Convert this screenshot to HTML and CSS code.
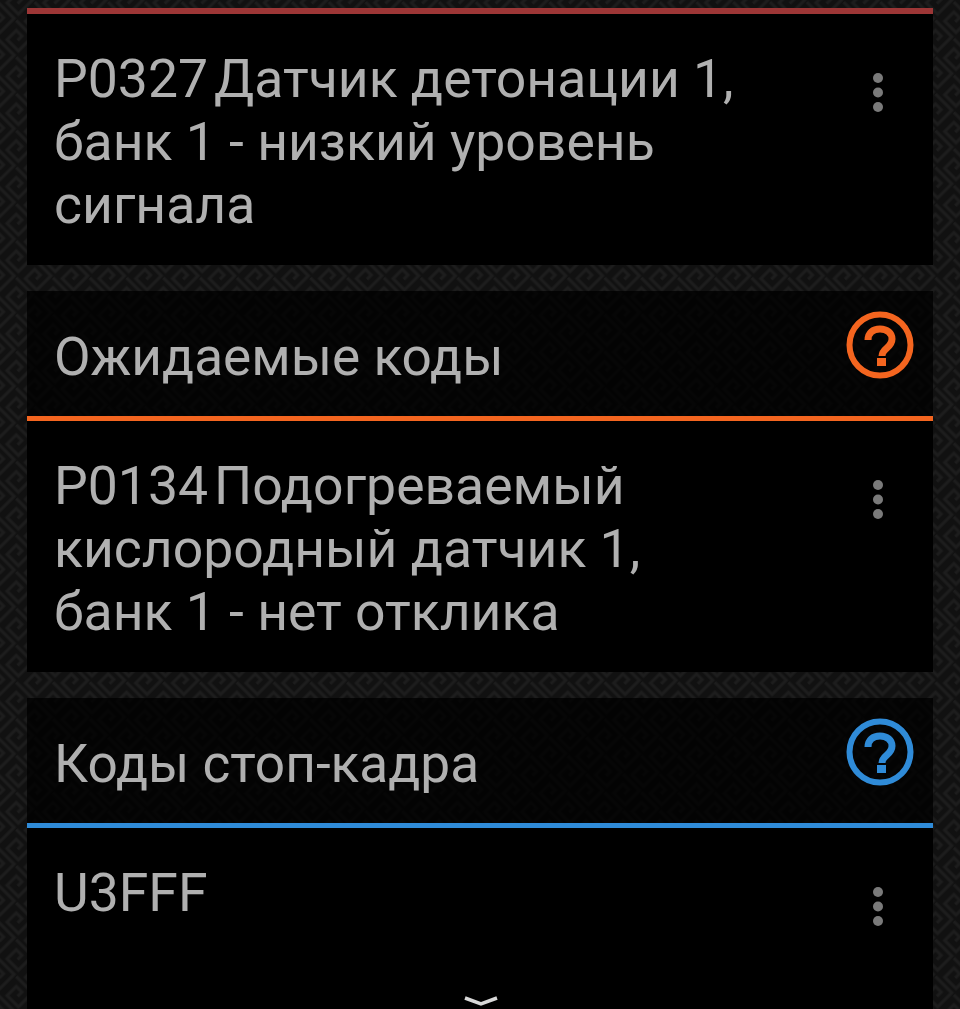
FILE: index.html
```html
<!DOCTYPE html>
<html lang="ru">
<head>
<meta charset="utf-8">
<title>Коды</title>
<link rel="stylesheet" href="styles.css">
</head>
<body>
<main class="list">
  <section class="card first">
    <div class="rule red"></div>
    <div class="row">
      <p class="code"><span class="num">P0327</span>Датчик детонации 1,<br>банк 1 - низкий уровень<br>сигнала</p>
      <svg class="dots" viewBox="0 0 12 41"><circle cx="6" cy="6" r="5"/><circle cx="6" cy="20.5" r="5"/><circle cx="6" cy="35" r="5"/></svg>
    </div>
  </section>
  <section class="card">
    <header class="head"><h2>Ожидаемые коды</h2>
      <svg class="help orange" viewBox="0 0 68 68"><circle cx="34" cy="34" r="30.5"/><path class="mark" d="M22 29c0-7 5-11 12-11s12 4 12 10c0 9-10 9-10 17"/><rect x="31" y="47" width="9" height="8"/></svg>
    </header>
    <div class="rule orange-line"></div>
    <div class="row">
      <p class="code"><span class="num">P0134</span>Подогреваемый<br>кислородный датчик 1,<br>банк 1 - нет отклика</p>
      <svg class="dots" viewBox="0 0 12 41"><circle cx="6" cy="6" r="5"/><circle cx="6" cy="20.5" r="5"/><circle cx="6" cy="35" r="5"/></svg>
    </div>
  </section>
  <section class="card">
    <header class="head"><h2>Коды стоп-кадра</h2>
      <svg class="help blue" viewBox="0 0 68 68"><circle cx="34" cy="34" r="30.5"/><path class="mark" d="M22 29c0-7 5-11 12-11s12 4 12 10c0 9-10 9-10 17"/><rect x="31" y="47" width="9" height="8"/></svg>
    </header>
    <div class="rule blue-line"></div>
    <div class="row last">
      <p class="code"><span class="num">U3FFF</span></p>
      <svg class="dots" viewBox="0 0 12 41"><circle cx="6" cy="6" r="5"/><circle cx="6" cy="20.5" r="5"/><circle cx="6" cy="35" r="5"/></svg>
      <svg class="chev" viewBox="0 0 36 10"><path d="M2 2L18 8L34 2"/></svg>
    </div>
  </section>
</main>
</body>
</html>
```
FILE: styles.css
```css
* { box-sizing: border-box; }
html, body { margin: 0; height: 100%; }
body {
  background-color: #111;
  background-image: url("data:image/svg+xml,%3Csvg xmlns='http://www.w3.org/2000/svg' width='960' height='1009'%3E%3Cdefs%3E%3Cpattern id='m' width='26' height='26' patternUnits='userSpaceOnUse' patternTransform='rotate(45)'%3E%3Cpath d='M0 3H23V23H7V10H15V16' fill='none' stroke='%231d1d1d' stroke-width='3'/%3E%3C/pattern%3E%3C/defs%3E%3Crect width='960' height='1009' fill='url(%23m)'/%3E%3C/svg%3E");
  overflow: hidden;
  font-family: Roboto, "Noto Sans", sans-serif;
  color: #b0b0b0;
}
.list { padding: 8px 27px 0; display: flex; flex-direction: column; gap: 26px; height: 1009px; filter: blur(.4px); }
.card { display: flex; flex-direction: column; }
.card:last-child { flex: 1; }
.head { height: 125px; background: rgba(0,0,0,.78); display: flex; justify-content: space-between; padding: 20px 19px 0 27px; }
.head h2 { margin: 1px 0 0; font-size: 53.2px; line-height: 90px; font-weight: 400; }
.help { width: 68px; height: 68px; fill: none; stroke-width: 6; }
.help .mark { stroke-width: 7; }
.help rect { stroke: none; }
.help.orange { stroke: #f4651f; }
.help.orange rect { fill: #f4651f; }
.help.blue { stroke: #2f8bd8; }
.help.blue rect { fill: #2f8bd8; }
.rule { height: 5px; }
.red { height: 6px; background: #9c3636; }
.orange-line { background: #f4651f; }
.blue-line { background: #2f8bd8; }
.row { background: #000; height: 251px; padding: 33px 49px 0 27px; display: flex; justify-content: space-between; align-items: flex-start; position: relative; }
.row.last { flex: 1; height: auto; }
.code { margin: 0; font-size: 53.5px; line-height: 63px; }
.num { margin-right: 6px; }
.dots { width: 12px; height: 41px; fill: #7a7a7a; margin-top: 25px; }
.chev { position: absolute; left: 436px; bottom: 3px; width: 36px; height: 10px; fill: none; stroke: #d8d8d8; stroke-width: 3.5; }
```
